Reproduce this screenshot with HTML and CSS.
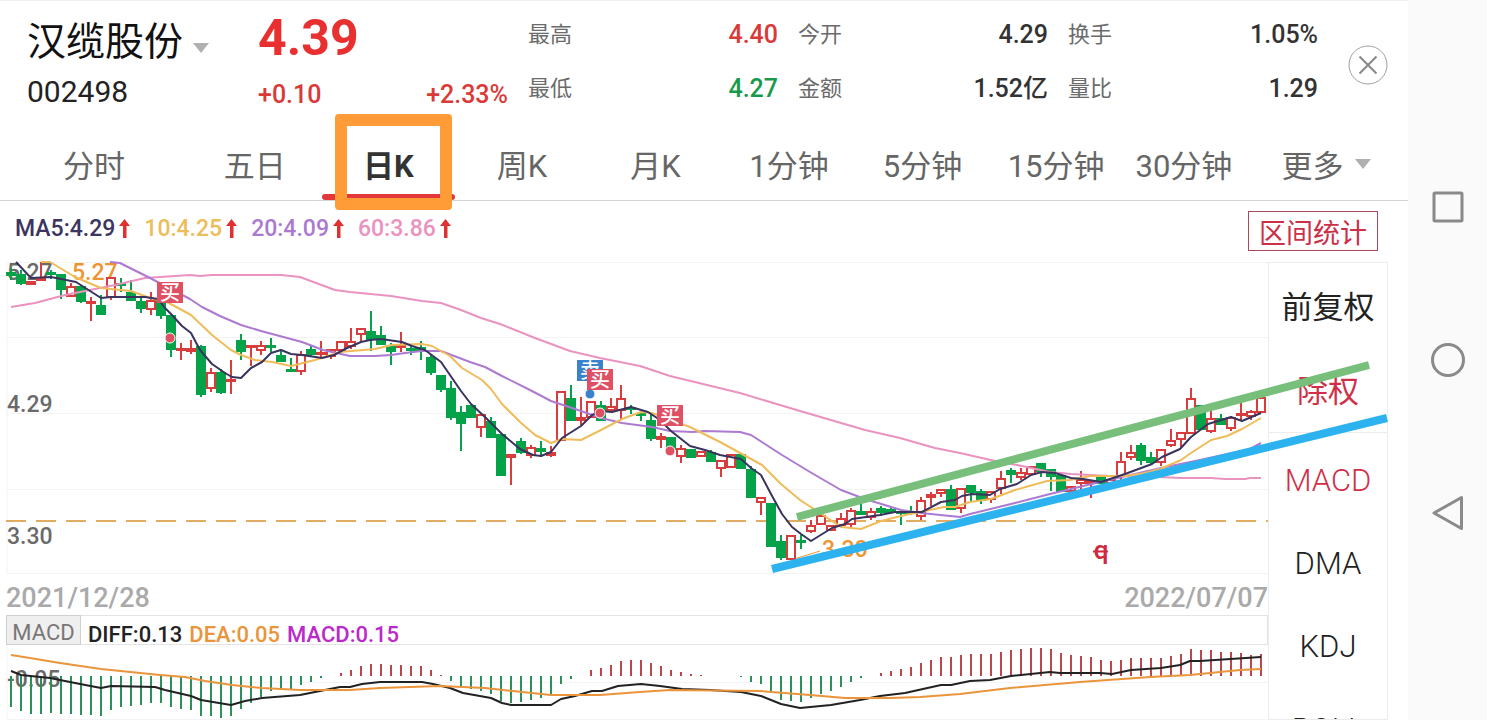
FILE: index.html
```html
<!DOCTYPE html>
<html lang="zh-CN">
<head>
<meta charset="utf-8">
<title>汉缆股份 002498</title>
<link rel="stylesheet" href="styles.css">
</head>
<body>
<main class="app">
  <header class="quote">
    <div class="stock">
      <button class="stock-name" type="button">汉缆股份<svg class="caret" viewBox="0 0 16 10"><path d="M0 0H16L8 10Z"/></svg></button>
      <div class="stock-code">002498</div>
    </div>
    <div class="price">
      <div class="price-now">4.39</div>
      <div class="price-change"><span>+0.10</span><span>+2.33%</span></div>
    </div>
    <dl class="stats">
      <div><dt>最高</dt><dd class="up">4.40</dd></div>
      <div><dt>最低</dt><dd class="down">4.27</dd></div>
    </dl>
    <dl class="stats">
      <div><dt>今开</dt><dd>4.29</dd></div>
      <div><dt>金额</dt><dd>1.52亿</dd></div>
    </dl>
    <dl class="stats">
      <div><dt>换手</dt><dd>1.05%</dd></div>
      <div><dt>量比</dt><dd>1.29</dd></div>
    </dl>
    <button class="close" type="button" aria-label="关闭"><svg viewBox="0 0 40 40"><circle cx="20" cy="20" r="19"/><path d="M11.500 11.500L28.500 28.500M28.500 11.500L11.500 28.500"/></svg></button>
  </header>

  <nav class="tabs">
    <button type="button">分时</button>
    <button type="button">五日</button>
    <button type="button" class="active">日K</button>
    <button type="button">周K</button>
    <button type="button">月K</button>
    <button type="button">1分钟</button>
    <button type="button">5分钟</button>
    <button type="button">15分钟</button>
    <button type="button">30分钟</button>
    <button type="button">更多<svg class="caret" viewBox="0 0 16 10"><path d="M0 0H16L8 10Z"/></svg></button>
  </nav>

  <div class="toolbar">
    <ul class="legend">
      <li class="ma5">MA5:4.29<svg viewBox="0 0 11 20"><path d="M5.500 0L11 7H7.500V19H4V7H0Z"/></svg></li>
      <li class="ma10">10:4.25<svg viewBox="0 0 11 20"><path d="M5.500 0L11 7H7.500V19H4V7H0Z"/></svg></li>
      <li class="ma20">20:4.09<svg viewBox="0 0 11 20"><path d="M5.500 0L11 7H7.500V19H4V7H0Z"/></svg></li>
      <li class="ma60">60:3.86<svg viewBox="0 0 11 20"><path d="M5.500 0L11 7H7.500V19H4V7H0Z"/></svg></li>
    </ul>
    <button class="range" type="button">区间统计</button>
  </div>

  <section class="board">
    <div class="charts">
      <svg class="kline" viewBox="6 262 1262 312">
        <path class="grid" d="M7 574V262.500H1268M7 337.500H1268M7 413.500H1268M7 489.500H1268M7 573.500H1268"/>
        <path class="last-close" d="M6 521H1268"/>
        <g class="axis">
          <text x="7" y="280">5.27</text>
          <text x="7" y="412">4.29</text>
          <text x="7" y="544">3.30</text>
        </g>
        <g class="extreme">
          <text x="72" y="280">5.27</text>
          <text x="822" y="557">3.30</text>
          <path d="M791 560L820 551"/>
        </g>
        <g id="candles"></g>
        <polyline class="line ma60" points="11,307 35,303 65,295 115,285 145,278 190,275 200,276 212,275 281,275 300,277 335,290 350,292 391,296 422,301 441,303 461,310 481,318 500,324 535,338 570,351 600,358 640,366 670,376 740,393 800,411 865,430 900,438 935,448 960,453 995,461 1022,466 1050,472 1071,474 1110,476 1160,477 1180,478 1211,478 1225,479 1245,479 1250,478 1261,478"/>
        <polyline class="line ma20" points="110,262 120,263 150,278 190,299 202,307 220,316 241,325 261,331 302,342 323,350 350,356 375,356 391,355 405,353 422,351 441,351 470,362 485,367 502,376 530,390 551,401 581,411 601,418 622,423 652,427 670,431 693,432 705,431 740,432 751,435 782,455 810,472 841,490 865,499 901,510 921,513 960,517 970,514 1015,503 1050,494 1100,482 1161,468 1200,460 1250,449 1261,443"/>
        <polyline class="line ma10" points="41,262 50,262 75,277 101,288 131,291 150,298 167,302 191,315 212,335 231,350 241,355 255,360 272,362 291,366 315,360 340,352 375,349 392,345 422,344 432,346 450,356 462,368 482,380 491,389 502,404 520,422 535,435 551,443 562,439 581,440 601,430 622,419 641,412 652,413 660,416 690,427 720,442 742,454 762,465 781,484 800,500 820,513 832,521 841,527 861,529 881,521 905,515 925,511 944,507 955,507 970,502 991,499 1015,490 1047,481 1070,480 1090,476 1125,476 1145,473 1160,469 1181,460 1191,453 1211,440 1227,436 1242,429 1261,418"/>
        <polyline class="line ma5" points="16,262 31,278 51,277 76,282 101,298 111,297 145,297 158,299 165,308 171,314 182,326 191,333 200,350 212,364 225,373 232,377 241,378 251,368 262,362 271,353 281,350 291,354 302,355 322,358 334,355 347,348 361,342 370,340 381,339 402,342 412,346 425,350 441,362 461,391 471,404 486,418 502,434 520,449 533,455 541,456 551,452 562,438 581,426 592,415 601,411 612,412 631,407 648,412 660,420 671,431 690,446 705,450 720,455 741,459 751,468 761,475 771,494 782,514 792,527 801,534 811,541 832,528 845,524 852,519 880,515 895,512 922,512 941,502 955,500 962,496 972,494 990,495 1000,489 1017,484 1031,475 1042,472 1055,473 1071,478 1083,479 1101,482 1125,474 1152,464 1162,457 1180,449 1191,437 1208,424 1231,417 1242,421 1261,413"/>
        <g class="trade sell"><rect x="577" y="360" width="26" height="21"/><text x="590" y="378">卖</text><circle cx="590" cy="394" r="5"/></g>
        <g class="trade buy">
          <rect x="157" y="282" width="26" height="21"/><text x="170" y="300">买</text><circle cx="170" cy="338" r="5"/>
          <rect x="587" y="369" width="26" height="21"/><text x="600" y="387">买</text><circle cx="600" cy="413" r="5"/>
          <rect x="657" y="405" width="26" height="21"/><text x="670" y="423">买</text><circle cx="670" cy="451" r="5"/>
        </g>
        <g class="ex-right"><text x="1101" y="559">q</text><path d="M1093 551.500H1108"/></g>
        <path class="trend pressure" d="M797 517L1369 365"/>
        <path class="trend support" d="M772 569L1387 418"/>
      </svg>
      <div class="dates"><time>2021/12/28</time><time>2022/07/07</time></div>
      <div class="macd-bar">
        <button type="button">MACD</button>
        <span class="diff">DIFF:0.13</span>
        <span class="dea">DEA:0.05</span>
        <span class="macd">MACD:0.15</span>
      </div>
      <svg class="macd-chart" viewBox="6 645 1262 75">
        <path class="grid" d="M7 645V720M7 682.500H1268M7 719.500H1268"/>
        <g class="axis"><text x="7" y="687">-0.05</text></g>
        <g id="bars"></g>
        <polyline class="line diff-line" points="11,671 21,675 50,678 75,683 101,688 111,686 155,687 165,690 191,696 201,700 231,705 245,701 262,698 300,695 340,687 350,687 362,684 380,682 422,682 433,684 450,688 463,693 491,698 502,703 511,705 551,705 561,699 575,696 592,691 602,691 618,686 641,684 660,686 682,689 710,690 741,692 761,696 781,704 800,708 831,705 860,700 880,696 905,693 941,685 951,685 970,681 990,680 1011,676 1050,672 1060,673 1100,673 1112,674 1131,670 1161,668 1180,665 1190,661 1200,661 1261,657"/>
        <polyline class="line dea-line" points="11,655 30,658 60,663 101,669 160,675 185,677 205,681 232,685 262,688 300,690 350,690 380,688 410,687 440,686 485,688 551,695 600,695 640,692 670,690 760,691 810,695 845,698 890,698 920,697 960,694 1010,688 1080,682 1150,677 1190,675 1240,670 1261,669"/>
      </svg>
    </div>
    <aside class="indicators">
      <div class="group adjust">
        <button type="button">前复权</button>
        <button type="button" class="on">除权</button>
      </div>
      <div class="group">
        <button type="button" class="on">MACD</button>
        <button type="button">DMA</button>
        <button type="button">KDJ</button>
        <button type="button">BOLL</button>
      </div>
    </aside>
  </section>
</main>

<nav class="system">
  <button type="button" aria-label="最近任务"><svg viewBox="0 0 36 36"><rect x="4" y="4" width="28" height="28" rx="1"/></svg></button>
  <button type="button" aria-label="主页"><svg viewBox="0 0 36 36"><circle cx="18" cy="18" r="15.500"/></svg></button>
  <button type="button" aria-label="返回"><svg viewBox="0 0 36 36"><path d="M31.500 2.500V33.500L4 18Z"/></svg></button>
</nav>
<script src="chart.js"></script>
</body>
</html>
```

FILE: styles.css
```css
* { box-sizing: border-box; }

body {
  margin: 0;
  height: 100vh;
  display: flex;
  overflow: hidden;
  background: #fff;
  color: #333;
  font-family: Roboto, "Noto Sans CJK SC", sans-serif;
}

button {
  margin: 0;
  padding: 0;
  border: 0;
  background: none;
  color: inherit;
  font: inherit;
}

dl, dd, ul { margin: 0; padding: 0; }

.app {
  flex: 1;
  min-width: 0;
  display: flex;
  flex-direction: column;
  border-top: 1px solid #f0f0f0;
}

.caret { width: 16px; height: 10px; fill: #b0b0b0; }

/* quote header */
.quote {
  flex: none;
  height: 130px;
  padding: 0 20px 0 27px;
  display: grid;
  grid-template-columns: 211px repeat(4, 1fr) 50px;
  column-gap: 20px;
}

.stock { padding-top: 14px; }
.stock-name {
  display: flex;
  align-items: center;
  gap: 10px;
  height: 54px;
  color: #111;
  font-size: 39px;
  line-height: 54px;
  white-space: nowrap;
}
.stock-name .caret { margin-top: 12px; }
.stock-code { color: #222; font-size: 30px; line-height: 46px; }

.price { padding-top: 10px; color: #e93030; }
.price-now { font-size: 50px; font-weight: 700; line-height: 54px; }
.price-change {
  display: flex;
  justify-content: space-between;
  color: #d93a38;
  font-size: 25px;
  font-weight: 500;
  line-height: 60px;
}

.stats { padding-top: 7px; }
.stats div {
  display: flex;
  justify-content: space-between;
  line-height: 54px;
}
.stats dt { color: #6b6b6b; font-size: 22px; }
.stats dd { font-size: 25px; font-weight: 500; }
.stats .up { color: #d93a38; }
.stats .down { color: #189a4c; }

.close { justify-self: end; margin-top: 44px; width: 40px; height: 40px; }
.close svg { display: block; fill: none; stroke: #a0a0a0; stroke-width: 1; }
.close path { stroke: #888; stroke-width: 2; }

/* period tabs */
.tabs {
  flex: none;
  height: 70px;
  display: grid;
  grid-template-columns: 376fr repeat(7, 267fr) 244fr 326fr;
  border-bottom: 1px solid #d4d4d4;
  color: #666;
  font-size: 31px;
}
.tabs button {
  position: relative;
  display: flex;
  justify-content: center;
  align-items: center;
  gap: 12px;
  min-width: 0;
  padding-bottom: 4px;
  white-space: nowrap;
}
.tabs .active { color: #333; font-weight: 700; }
.tabs .active::before {
  content: "";
  position: absolute;
  inset: auto 0 0;
  height: 6px;
  border-radius: 3px;
  background: #e2383a;
}
.tabs .active::after {
  content: "";
  position: absolute;
  inset: -17px 3px -10px 13px;
  border: 12px solid #ff9c37;
  border-radius: 4px;
}

/* moving-average legend */
.toolbar {
  flex: none;
  height: 61px;
  padding: 0 30px 0 15px;
  display: flex;
  justify-content: space-between;
  align-items: flex-start;
}
.legend {
  display: flex;
  gap: 14px;
  list-style: none;
  font-size: 23px;
  font-weight: 500;
  line-height: 56px;
}
.legend li { display: flex; align-items: center; gap: 4px; }
.legend svg { width: 11px; height: 20px; fill: #e03030; }
.legend .ma5 { color: #3b3560; }
.legend .ma10 { color: #edbd5c; }
.legend .ma20 { color: #ab7ad0; }
.legend .ma60 { color: #ea93bf; }

.range {
  width: 130px;
  height: 40px;
  margin-top: 10px;
  border: 1px solid #a84a5c;
  color: #cc3048;
  font-size: 27px;
  line-height: 44px;
}

/* charts and indicator list */
.board {
  flex: 1;
  min-height: 0;
  padding: 0 20px 0 6px;
  display: flex;
}
.charts { flex: 1; min-width: 0; }
.charts > svg { display: block; width: 100%; }

.kline { position: relative; overflow: visible; pointer-events: none; }
.grid { fill: none; stroke: #f3f3f3; }
.last-close { fill: none; stroke: #e2ab62; stroke-width: 2; stroke-dasharray: 20 10; }
.axis text { fill: #6a6a6a; font-size: 23px; font-weight: 500; }
.extreme text { fill: #f09432; font-size: 23px; font-weight: 500; }
.extreme path { stroke: #f09432; }

.line { fill: none; stroke-width: 2; stroke-linejoin: round; }
.line.ma5 { stroke: #39335e; }
.line.ma10 { stroke: #f0bc5a; }
.line.ma20 { stroke: #ac7ad2; }
.line.ma60 { stroke: #ea92c0; }
.diff-line { stroke: #222; }
.dea-line { stroke: #ea943c; }

.candle-up { fill: #fff; stroke: #d93c3c; stroke-width: 2; }
.candle-down { fill: #04a34a; stroke: #04a34a; stroke-width: 2; }
.bar-up { stroke: #b8484c; stroke-width: 2; }
.bar-down { stroke: #2c9058; stroke-width: 2; }

.trade text { fill: #fff; font-size: 20px; font-weight: 500; text-anchor: middle; }
.buy { fill: #df5065; }
.sell { fill: #3a82cc; }
.trade circle { stroke: #fff; stroke-width: 1; }
.ex-right text { fill: #d02840; font-size: 26px; font-weight: 500; text-anchor: middle; }
.ex-right path { stroke: #d02840; stroke-width: 2; }

.trend { fill: none; stroke-width: 8; }
.pressure { stroke: #77bf7b; }
.support { stroke: #2db2f0; }

.dates {
  display: flex;
  justify-content: space-between;
  color: #aaa;
  font-size: 27px;
  font-weight: 500;
  line-height: 48px;
  height: 41px;
}

.macd-bar {
  height: 30px;
  display: flex;
  align-items: center;
  gap: 7px;
  border: 1px solid #e4e4e4;
  border-left: 0;
  font-size: 22px;
  font-weight: 500;
  line-height: 36px;
}
.macd-bar button {
  width: 75px;
  height: 30px;
  border: 1px solid #d0d0d0;
  background: #efefef;
  color: #777;
  font-weight: 400;
  line-height: 34px;
}
.macd-bar span { margin-top: 9px; }
.diff { color: #222; }
.dea { color: #ea943c; }
.macd { color: #bb28cc; }

.indicators {
  flex: none;
  width: 120px;
  overflow: hidden;
  border: 1px solid #ececec;
  color: #222;
  font-size: 31px;
}
.group { padding-top: 6px; }
.adjust { padding-top: 1px; border-bottom: 1px solid #ececec; }
.group button { display: block; width: 100%; height: 84px; line-height: 88px; }
.group .on { color: #cf3048; }
.group:last-child button { height: 83px; line-height: 83px; font-weight: 300; }

/* device navigation */
.system {
  flex: none;
  width: 79px;
  display: flex;
  flex-direction: column;
  align-items: center;
  justify-content: center;
  gap: 117px;
  background: #fafafa;
}
.system svg { display: block; width: 36px; height: 36px; fill: none; stroke: #8a8a8a; stroke-width: 3; stroke-linejoin: round; }
```

FILE: chart.js
```js
// Each candle: direction (1 rise, 0 fall), high, body top, body bottom, low.
const candles = [
  [0,268,272,276,280],[0,270,274,284,285],[1,281,281,285,285],[1,262,277,281,281],[0,270,272,275,279],
  [0,274,274,290,299],[1,283,286,297,297],[0,286,286,302,303],[1,297,301,303,321],[0,295,305,315,315],
  [1,277,277,298,300],[0,278,283,286,292],[0,280,292,301,301],[0,297,301,309,313],[1,292,300,310,315],
  [0,300,300,316,319],[0,315,315,350,357],[1,343,348,351,360],[1,340,348,352,354],[0,345,346,395,397],
  [1,368,372,389,392],[0,369,372,393,394],[1,360,379,382,394],[0,334,340,352,360],[1,345,345,348,366],
  [1,341,345,351,355],[0,338,345,347,352],[0,351,355,362,362],[0,358,369,372,372],[1,351,354,372,375],
  [0,346,349,355,356],[1,341,352,355,358],[1,349,349,357,359],[1,341,341,351,351],[1,328,341,347,349],
  [1,328,328,335,342],[0,311,331,340,351],[0,326,335,345,345],[0,343,345,352,365],[1,332,345,348,352],
  [0,345,348,350,355],[0,341,347,351,360],[0,355,357,373,375],[0,375,375,390,392],[0,381,388,418,420],
  [0,406,412,424,451],[0,405,405,418,418],[1,414,414,428,437],[0,417,421,438,438],[0,434,434,476,476],
  [1,454,454,458,485],[0,438,441,453,454],[1,445,447,456,458],[0,441,448,452,457],[1,446,452,456,457],
  [1,391,391,441,441],[0,385,398,421,421],[1,397,417,421,425],[1,401,401,418,418],[0,401,405,421,421],
  [1,398,406,411,411],[1,385,398,411,420],[0,405,407,410,414],[0,411,413,415,421],[0,413,420,439,441],
  [1,433,436,440,448],[0,437,437,450,450],[1,445,448,457,463],[0,449,449,458,458],[1,451,451,457,457],
  [0,450,452,462,462],[1,460,460,469,477],[1,454,454,468,468],[0,454,454,469,469],[0,466,469,498,498],
  [1,497,497,503,515],[0,503,503,547,547],[0,535,541,558,560],[1,535,535,560,560],[0,535,540,542,549],
  [1,520,525,532,533],[1,515,515,525,525],[1,525,525,531,531],[1,513,518,526,527],[1,508,510,525,528],
  [0,501,511,515,515],[1,508,511,518,520],[0,506,508,513,516],[0,507,509,513,513],[0,510,511,513,525],
  [0,506,511,513,515],[1,497,500,517,520],[1,492,494,498,506],[1,489,489,494,497],[0,485,489,510,510],
  [1,488,488,509,513],[0,485,485,493,501],[0,489,491,501,504],[1,491,491,500,503],[1,471,478,489,494],
  [0,468,470,475,483],[1,468,472,478,480],[1,466,466,475,475],[0,463,463,472,477],[0,469,469,477,491],
  [0,475,475,492,492],[1,486,486,492,492],[1,471,479,484,490],[1,480,480,484,498],[0,477,477,484,484],
  [1,479,479,484,484],[1,452,461,477,486],[1,445,452,458,460],[0,443,445,461,465],[0,452,457,463,464],
  [1,449,449,463,466],[1,429,440,446,447],[1,432,432,440,447],[1,388,398,434,434],[0,405,405,430,430],
  [1,410,418,432,433],[0,414,418,425,425],[1,416,417,429,431],[1,403,413,415,420],[1,410,411,417,420],
  [1,397,397,413,413]
];

// End of each histogram bar, measured from the zero line at 676.
const zero = 676;
const histogram = [
  707,711,714,714,713,714,714,715,715,716,710,707,706,705,703,703,707,709,710,716,716,718,716,709,703,697,
  691,689,689,685,682,678,676,673,670,666,664,664,665,665,666,666,670,675,681,687,689,691,694,701,703,702,
  700,698,696,684,679,676,670,668,665,661,660,660,663,666,670,672,674,675,676,676,676,677,682,684,693,700,
  701,702,698,694,691,687,682,678,676,673,671,669,667,663,660,657,657,655,654,654,654,652,650,649,648,648,
  649,653,655,656,657,660,661,660,658,658,658,658,656,654,649,650,650,652,652,653,655,654
];

const xOf = i => 11 + i * 10;

function add(parent, name, attrs) {
  const node = document.createElementNS("http://www.w3.org/2000/svg", name);
  for (const key in attrs) node.setAttribute(key, attrs[key]);
  parent.appendChild(node);
}

const candleLayer = document.getElementById("candles");
candles.forEach(([rise, high, top, bottom, low], i) => {
  const x = xOf(i);
  const body = `M${x - 4} ${top + 1}H${x + 4}V${Math.max(bottom - 1, top + 2)}H${x - 4}Z`;
  const wicks = `M${x} ${high}V${top}M${x} ${bottom}V${low}`;
  add(candleLayer, "path", { class: rise ? "candle-up" : "candle-down", d: wicks + body });
});

const barLayer = document.getElementById("bars");
histogram.forEach((end, i) => {
  if (end !== zero) {
    add(barLayer, "path", { class: end < zero ? "bar-up" : "bar-down", d: `M${xOf(i)} ${zero}V${end}` });
  }
});
```
